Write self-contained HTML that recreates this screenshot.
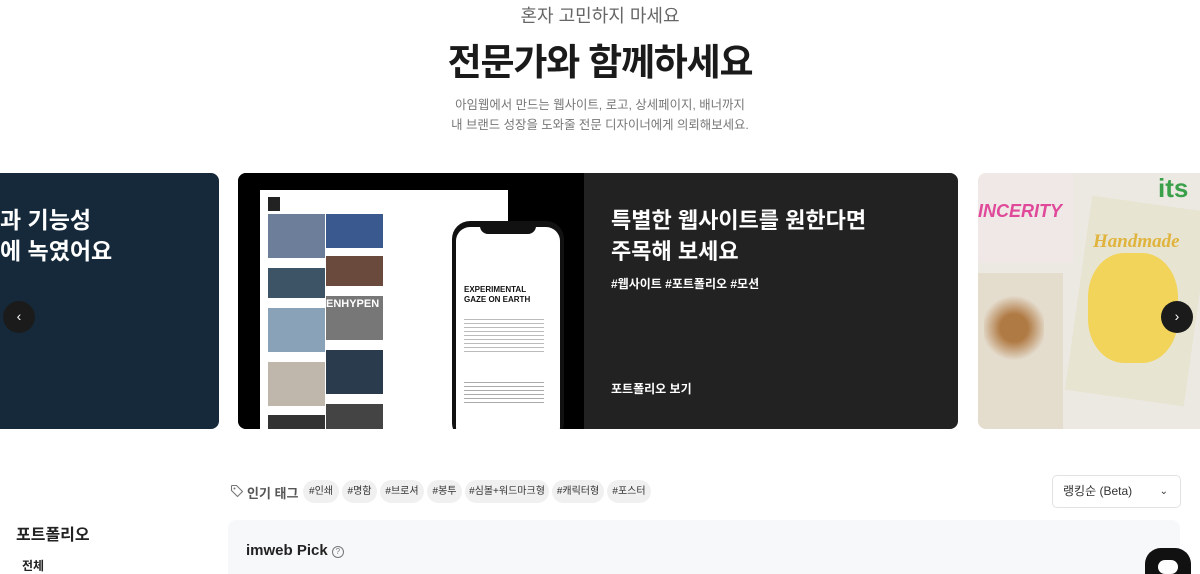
<!DOCTYPE html>
<html><head><meta charset="utf-8"><style>
*{margin:0;padding:0;box-sizing:border-box}
html,body{width:1200px;height:574px;overflow:hidden}
body{background:#fff;font-family:"Liberation Sans","Noto Sans CJK KR",sans-serif;position:relative;color:#222}
.abs{position:absolute}
.t1{left:0;width:1200px;top:2px;text-align:center;font-size:18px;color:#666}
.t2{left:0;width:1200px;top:32px;text-align:center;font-size:37px;font-weight:700;color:#1a1a1a;letter-spacing:-1.2px}
.t3{left:0;width:1200px;top:95px;text-align:center;font-size:12.4px;color:#777;line-height:20px}
.card{border-radius:8px;overflow:hidden;top:173px;height:256px}
.btn{width:32px;height:32px;border-radius:50%;background:#1b1b1b;color:#fff;font-size:14px;text-align:center;line-height:31px;top:301px}
.tag{top:480px;height:23px;border-radius:12px;background:#f0f0f1;font-size:10px;color:#333;line-height:23px;text-align:center}
.g{background:#ccc}
</style></head><body>
<div class="abs t1">혼자 고민하지 마세요</div>
<div class="abs t2">전문가와 함께하세요</div>
<div class="abs t3">아임웹에서 만드는 웹사이트, 로고, 상세페이지, 배너까지<br>내 브랜드 성장을 도와줄 전문 디자이너에게 의뢰해보세요.</div>

<div class="abs card" style="left:-10px;width:229px;background:#15293a">
<div class="abs" style="left:10px;top:32px;color:#fff;font-size:23px;font-weight:700;line-height:31px;white-space:nowrap">과 기능성<br>에 녹였어요</div>
</div>

<div class="abs card" style="left:238px;width:720px;background:#222">
 <div class="abs" style="left:0;top:0;width:346px;height:256px;background:#000">
  <div class="abs" style="left:22px;top:17px;width:248px;height:239px;background:#fff">
   <div class="abs" style="left:8px;top:7px;width:12px;height:14px;background:#222"></div>
   <div class="abs g" style="left:8px;top:24px;width:57px;height:44px;background:#6c7e99"></div>
   <div class="abs g" style="left:66px;top:24px;width:57px;height:34px;background:#3a5a8f"></div>
   <div class="abs g" style="left:8px;top:78px;width:57px;height:30px;background:#3d5466"></div>
   <div class="abs g" style="left:66px;top:66px;width:57px;height:30px;background:#6a4a3c"></div>
   <div class="abs g" style="left:8px;top:118px;width:57px;height:44px;background:#8aa2b8"></div>
   <div class="abs g" style="left:66px;top:106px;width:57px;height:44px;background:#777"></div>
   <div class="abs" style="left:66px;top:108px;color:#fff;font-size:11px;font-weight:700">ENHYPEN</div>
   <div class="abs g" style="left:8px;top:172px;width:57px;height:44px;background:#bfb6ac"></div>
   <div class="abs g" style="left:66px;top:160px;width:57px;height:44px;background:#2a3b4e"></div>
   <div class="abs g" style="left:8px;top:225px;width:57px;height:14px;background:#333"></div>
   <div class="abs g" style="left:66px;top:214px;width:57px;height:25px;background:#444"></div>
  </div>
  <div class="abs" style="left:214px;top:48px;width:112px;height:220px;background:#111;border-radius:18px">
   <div class="abs" style="left:4px;top:6px;width:104px;height:214px;background:#fff;border-radius:14px"></div>
   <div class="abs" style="left:28px;top:3px;width:56px;height:10px;background:#111;border-radius:0 0 8px 8px"></div>
   <div class="abs" style="left:12px;top:64px;font-size:8px;font-weight:700;line-height:10px;color:#111">EXPERIMENTAL<br>GAZE ON EARTH</div>
   <div class="abs" style="left:12px;top:95px;width:80px;height:36px;background:repeating-linear-gradient(#fff 0 3px,#bbb 3px 4px)"></div>
   <div class="abs" style="left:12px;top:158px;width:80px;height:26px;background:repeating-linear-gradient(#fff 0 3px,#aaa 3px 4px)"></div>
  </div>
 </div>
 <div class="abs" style="left:373px;top:32px;color:#fff;font-size:22px;font-weight:700;line-height:31px">특별한 웹사이트를 원한다면<br>주목해 보세요</div>
 <div class="abs" style="left:373px;top:102px;color:#fff;font-size:12px;font-weight:700">#웹사이트 #포트폴리오 #모션</div>
 <div class="abs" style="left:373px;top:207px;color:#fff;font-size:12px;font-weight:700">포트폴리오 보기</div>
</div>

<div class="abs card" style="left:978px;width:240px;background:#ece9e3">
 <div class="abs" style="left:0;top:0;width:95px;height:90px;background:#efe8e6"></div>
 <div class="abs" style="left:0;top:28px;color:#e0489a;font-size:18px;font-weight:700;font-style:italic">INCERITY</div>
 <div class="abs" style="left:0;top:100px;width:85px;height:156px;background:#e4dccd"></div>
 <div class="abs" style="left:6px;top:120px;width:60px;height:70px;background:radial-gradient(circle,#b07a44 30%,transparent 70%)"></div>
 <div class="abs" style="left:100px;top:30px;width:120px;height:196px;background:#e8e4d2;transform:rotate(8deg)"></div>
 <div class="abs" style="left:110px;top:80px;width:90px;height:110px;border-radius:40%;background:#f2d45a"></div>
 <div class="abs" style="left:115px;top:58px;color:#e0b43c;font-size:19px;font-style:italic;font-family:'Liberation Serif',serif;font-weight:700">Handmade</div>
 <div class="abs" style="left:180px;top:0;color:#3aa04a;font-size:26px;font-weight:700">its</div>
</div>

<div class="abs btn" style="left:3px">&#8249;</div>
<div class="abs btn" style="left:1161px">&#8250;</div>

<svg class="abs" style="left:230px;top:484px" width="14" height="14" viewBox="0 0 14 14"><path d="M1.5 2v4.5l6 6 5-5-6-6H2z" fill="none" stroke="#777" stroke-width="1.1"/><circle cx="4.5" cy="4.5" r="1" fill="#777"/></svg>
<div class="abs" style="left:247px;top:483px;font-size:13px;color:#555;font-weight:700">인기 태그</div>
<div class="abs tag" style="left:303px;width:36px">#인쇄</div>
<div class="abs tag" style="left:342px;width:35px">#명함</div>
<div class="abs tag" style="left:380px;width:44px">#브로셔</div>
<div class="abs tag" style="left:427px;width:35px">#봉투</div>
<div class="abs tag" style="left:465px;width:84px">#심볼+워드마크형</div>
<div class="abs tag" style="left:552px;width:52px">#캐릭터형</div>
<div class="abs tag" style="left:607px;width:44px">#포스터</div>

<div class="abs" style="left:1052px;top:475px;width:129px;height:33px;border:1px solid #e2e2e2;border-radius:5px;font-size:12px;line-height:31px;padding-left:10px;color:#333">랭킹순 (Beta)<span style="position:absolute;right:12px;top:0;font-size:10px">&#8964;</span></div>

<div class="abs" style="left:16px;top:521px;font-size:16px;font-weight:700;color:#222">포트폴리오</div>
<div class="abs" style="left:22px;top:557px;font-size:12px;font-weight:700;color:#222">전체</div>

<div class="abs" style="left:228px;top:520px;width:952px;height:60px;background:#f7f8fa;border-radius:8px">
 <div class="abs" style="left:18px;top:22px;font-size:15px;font-weight:700;color:#222">imweb Pick <span style="display:inline-block;width:12px;height:12px;border:1px solid #777;border-radius:50%;font-size:8px;line-height:10px;text-align:center;font-weight:400;color:#777;vertical-align:1px">?</span></div>
</div>
<div class="abs" style="left:1145px;top:548px;width:46px;height:46px;border-radius:16px;background:#111"></div>
<div class="abs" style="left:1158px;top:560px;width:20px;height:14px;border-radius:8px;background:#fff"></div>
</body></html>
